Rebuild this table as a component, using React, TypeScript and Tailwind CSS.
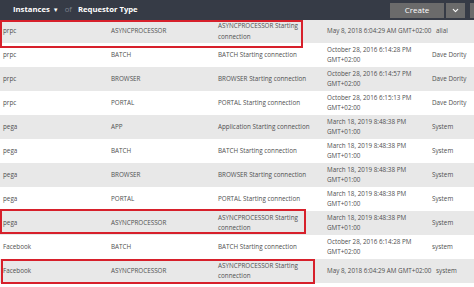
import { ChevronDown } from 'lucide-react'

type Row = {
    app: string
    type: string
    desc: string
    date: string
    tz?: string
    user: string
}

const rows: Row[] = [
    { app: 'prpc', type: 'ASYNCPROCESSOR', desc: 'ASYNCPROCESSOR Starting connection', date: 'May 8, 2018 6:04:29 AM GMT+02:00', user: 'allal' },
    { app: 'prpc', type: 'BATCH', desc: 'BATCH Starting connection', date: 'October 28, 2016 6:14:28 PM', tz: 'GMT+02:00', user: 'Dave Dority' },
    { app: 'prpc', type: 'BROWSER', desc: 'BROWSER Starting connection', date: 'October 28, 2016 6:14:57 PM', tz: 'GMT+02:00', user: 'Dave Dority' },
    { app: 'prpc', type: 'PORTAL', desc: 'PORTAL Starting connection', date: 'October 28, 2016 6:15:13 PM', tz: 'GMT+02:00', user: 'Dave Dority' },
    { app: 'pega', type: 'APP', desc: 'Application Starting connection', date: 'March 18, 2019 8:48:38 PM', tz: 'GMT+01:00', user: 'System' },
    { app: 'pega', type: 'BATCH', desc: 'BATCH Starting connection', date: 'March 18, 2019 8:48:38 PM', tz: 'GMT+01:00', user: 'System' },
    { app: 'pega', type: 'BROWSER', desc: 'BROWSER Starting connection', date: 'March 18, 2019 8:48:38 PM', tz: 'GMT+01:00', user: 'System' },
    { app: 'pega', type: 'PORTAL', desc: 'PORTAL Starting connection', date: 'March 18, 2019 8:48:38 PM', tz: 'GMT+01:00', user: 'System' },
    { app: 'pega', type: 'ASYNCPROCESSOR', desc: 'ASYNCPROCESSOR Starting connection', date: 'March 18, 2019 8:48:38 PM', tz: 'GMT+01:00', user: 'System' },
    { app: 'Facebook', type: 'BATCH', desc: 'BATCH Starting connection', date: 'October 28, 2016 6:14:28 PM', tz: 'GMT+02:00', user: 'system' },
    { app: 'Facebook', type: 'ASYNCPROCESSOR', desc: 'ASYNCPROCESSOR Starting connection', date: 'May 8, 2018 6:04:29 AM GMT+02:00', user: 'system' },
]

const App = () => {
    return (
        <div className="relative w-[474px] h-[287px] overflow-hidden bg-white font-['Open_Sans',sans-serif]">
            {/* header bar */}
            <div className="flex items-center h-[20px] bg-[#363b46] pl-[13px]">
                <span className="text-[7.7px] font-bold text-white">Instances</span>
                <span className="ml-[3px] text-[6px] text-white">▼</span>
                <span className="ml-[6px] text-[7.7px] text-[#7d838f]">of</span>
                <span className="ml-[6px] text-[7.7px] font-bold text-white">Requestor Type</span>
                <div className="ml-auto flex items-center">
                    <button className="w-[54px] h-[15px] bg-[#6b6b6b] text-white text-[8px] flex items-center justify-center">
                        Create
                    </button>
                    <button className="ml-[2px] w-[19px] h-[15px] bg-[#6b6b6b] text-white flex items-center justify-center">
                        <ChevronDown className="w-[9px] h-[9px]" strokeWidth={3} />
                    </button>
                    <div className="ml-[5px] w-[4px] h-[15px] bg-[#6b6b6b]" />
                </div>
            </div>

            {/* rows */}
            <div className="flex flex-col text-[6.3px] leading-[10.5px] text-[#505050]">
                {rows.map((r, i) => (
                    <div
                        key={i}
                        className={`grid grid-cols-[108px_107px_109px_105px_1fr] items-center pl-[3px] ${i === 0 ? 'h-[23px]' : 'h-[24px]'} ${i % 2 === 0 ? 'bg-[#e8e8e8]' : 'bg-white'}`}
                    >
                        <div>{r.app}</div>
                        <div>{r.type}</div>
                        <div className="pr-[8px]">{r.desc}</div>
                        <div className={r.tz ? '' : 'whitespace-nowrap'}>
                            {r.date}
                            {r.tz && <br />}
                            {r.tz}
                        </div>
                        <div className={r.tz ? '' : 'pl-[4px]'}>{r.user}</div>
                    </div>
                ))}
            </div>

            {/* red annotation boxes */}
            <div className="absolute left-0 top-[20px] w-[303px] h-[28px] border-2 border-[#d7202b]" />
            <div className="absolute left-0 top-[209px] w-[306px] h-[25px] border-2 border-[#d7202b]" />
            <div className="absolute left-[1px] top-[259px] w-[314px] h-[25px] border-2 border-[#d7202b]" />
        </div>
    )
}

export default App
